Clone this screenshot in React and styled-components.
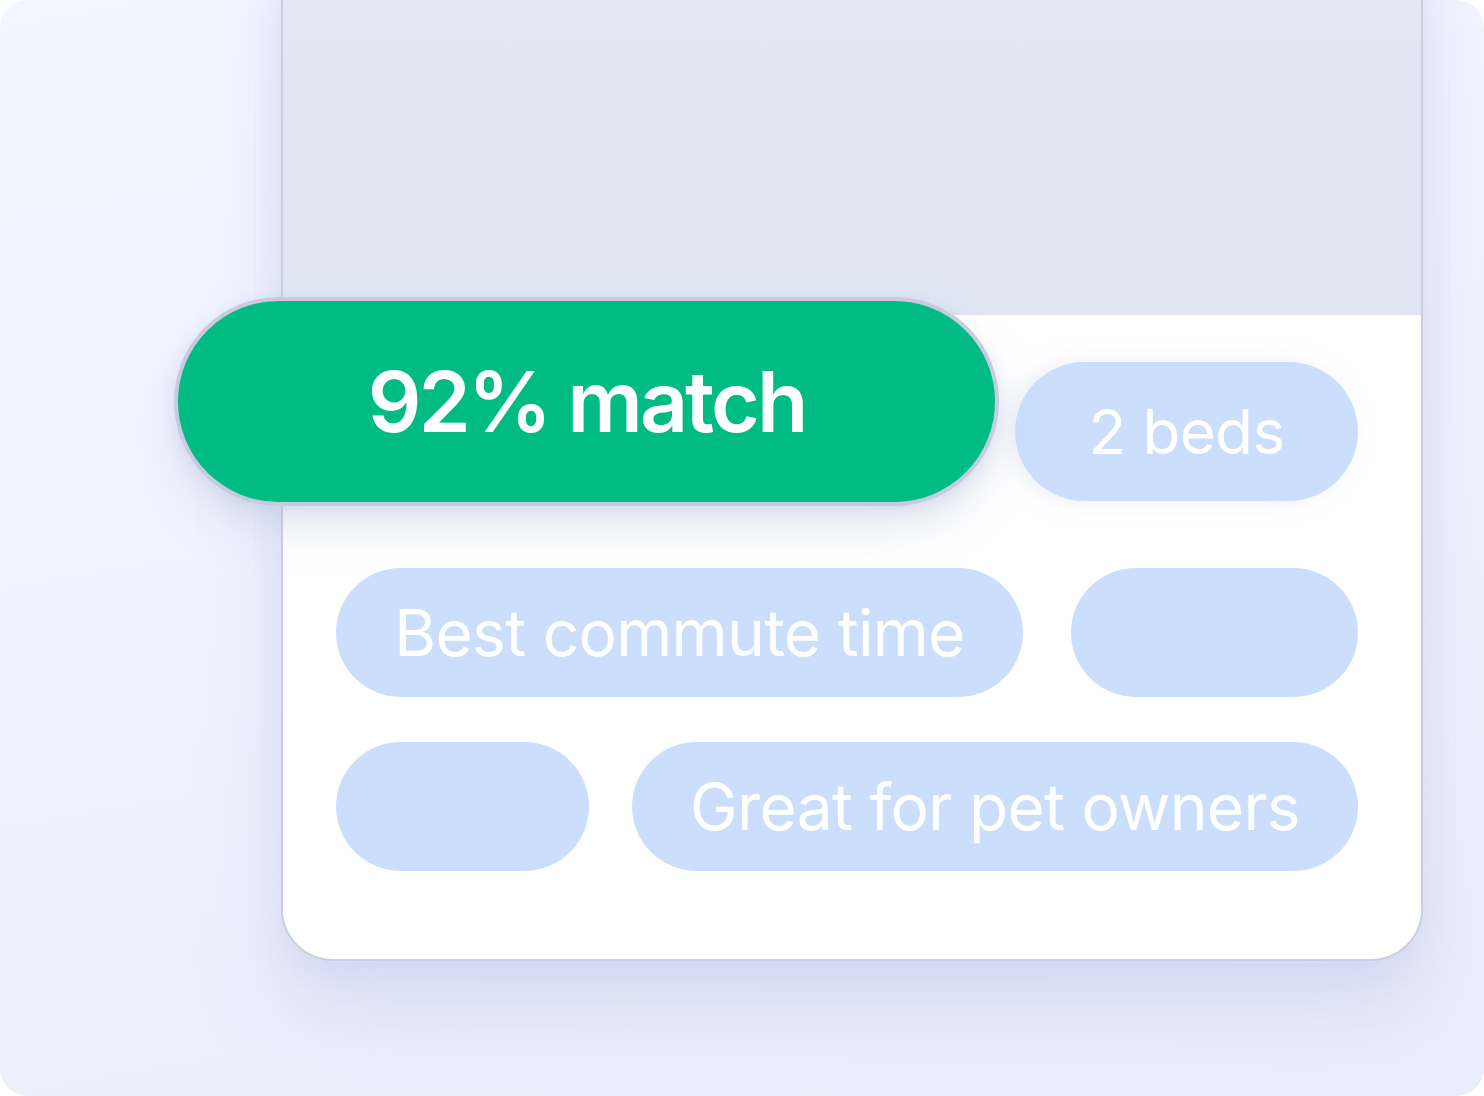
import styled, { createGlobalStyle } from "styled-components";

const GlobalStyle = createGlobalStyle`
  html, body {
    margin: 0;
    padding: 0;
    background: #ffffff;
  }
  body {
    font-family: "Inter", "Noto Sans", sans-serif;
  }
`;

const Stage = styled.div`
  width: 1484px;
  height: 1096px;
  box-sizing: border-box;
  border-radius: 28px;
  overflow: hidden;
  background: linear-gradient(170deg, #f2f6ff 0%, #eff2fd 55%, #eaedfb 100%);
  padding-left: 281px;
`;

const Card = styled.div`
  width: 1142px;
  height: 1031px;
  margin-top: -70px;
  box-sizing: border-box;
  border: 2px solid #c9cee1;
  border-radius: 52px;
  background: #ffffff;
  display: flex;
  flex-direction: column;
  box-shadow: 0 50px 70px rgba(196, 204, 238, 0.5),
    0 10px 30px rgba(205, 212, 240, 0.35);
`;

const Cover = styled.div`
  height: 383px;
  flex-shrink: 0;
  border-radius: 50px 50px 0 0;
  background: linear-gradient(180deg, #e3e8f3 0%, #dfe6f2 100%);
`;

const Body = styled.div`
  position: relative;
  flex: 1;
  padding: 47px 63px 0 53px;
  display: flex;
  flex-direction: column;
  gap: 45px;
`;

const Row = styled.div`
  display: flex;
  justify-content: ${(p) => (p.$end ? "flex-end" : "space-between")};
  margin-bottom: ${(p) => p.$after || 0}px;
`;

const Pill = styled.div`
  width: ${(p) => p.$w}px;
  height: 129px;
  box-sizing: border-box;
  border-radius: 65px;
  background: #cbdffc;
  color: #ffffff;
  font-size: 64px;
  font-weight: 400;
  letter-spacing: -0.7px;
  display: flex;
  align-items: center;
  justify-content: center;
  white-space: nowrap;
`;

const BedsPill = styled(Pill)`
  height: 139px;
  border-radius: 70px;
  font-size: 62px;
  box-shadow: -8px 0 22px rgba(205, 212, 235, 0.35);
`;

const MatchBadge = styled.div`
  position: absolute;
  left: -109px;
  top: -18px;
  width: 825px;
  height: 209px;
  box-sizing: border-box;
  border: 4px solid #c6cbdf;
  border-radius: 105px;
  background: #00bb84;
  color: #ffffff;
  font-size: 84px;
  font-weight: 600;
  letter-spacing: -3px;
  display: flex;
  align-items: center;
  justify-content: center;
  box-shadow: 0 22px 40px rgba(180, 190, 220, 0.35),
    0 6px 14px rgba(180, 190, 220, 0.25);
`;

export default function App() {
  return (
    <>
      <GlobalStyle />
      <Stage>
        <Card>
          <Cover />
          <Body>
            <MatchBadge>92% match</MatchBadge>
            <Row $end $after={22}>
              <BedsPill $w={343}>2 beds</BedsPill>
            </Row>
            <Row>
              <Pill $w={687}>Best commute time</Pill>
              <Pill $w={287} />
            </Row>
            <Row>
              <Pill $w={253} />
              <Pill $w={726}>Great for pet owners</Pill>
            </Row>
          </Body>
        </Card>
      </Stage>
    </>
  );
}
